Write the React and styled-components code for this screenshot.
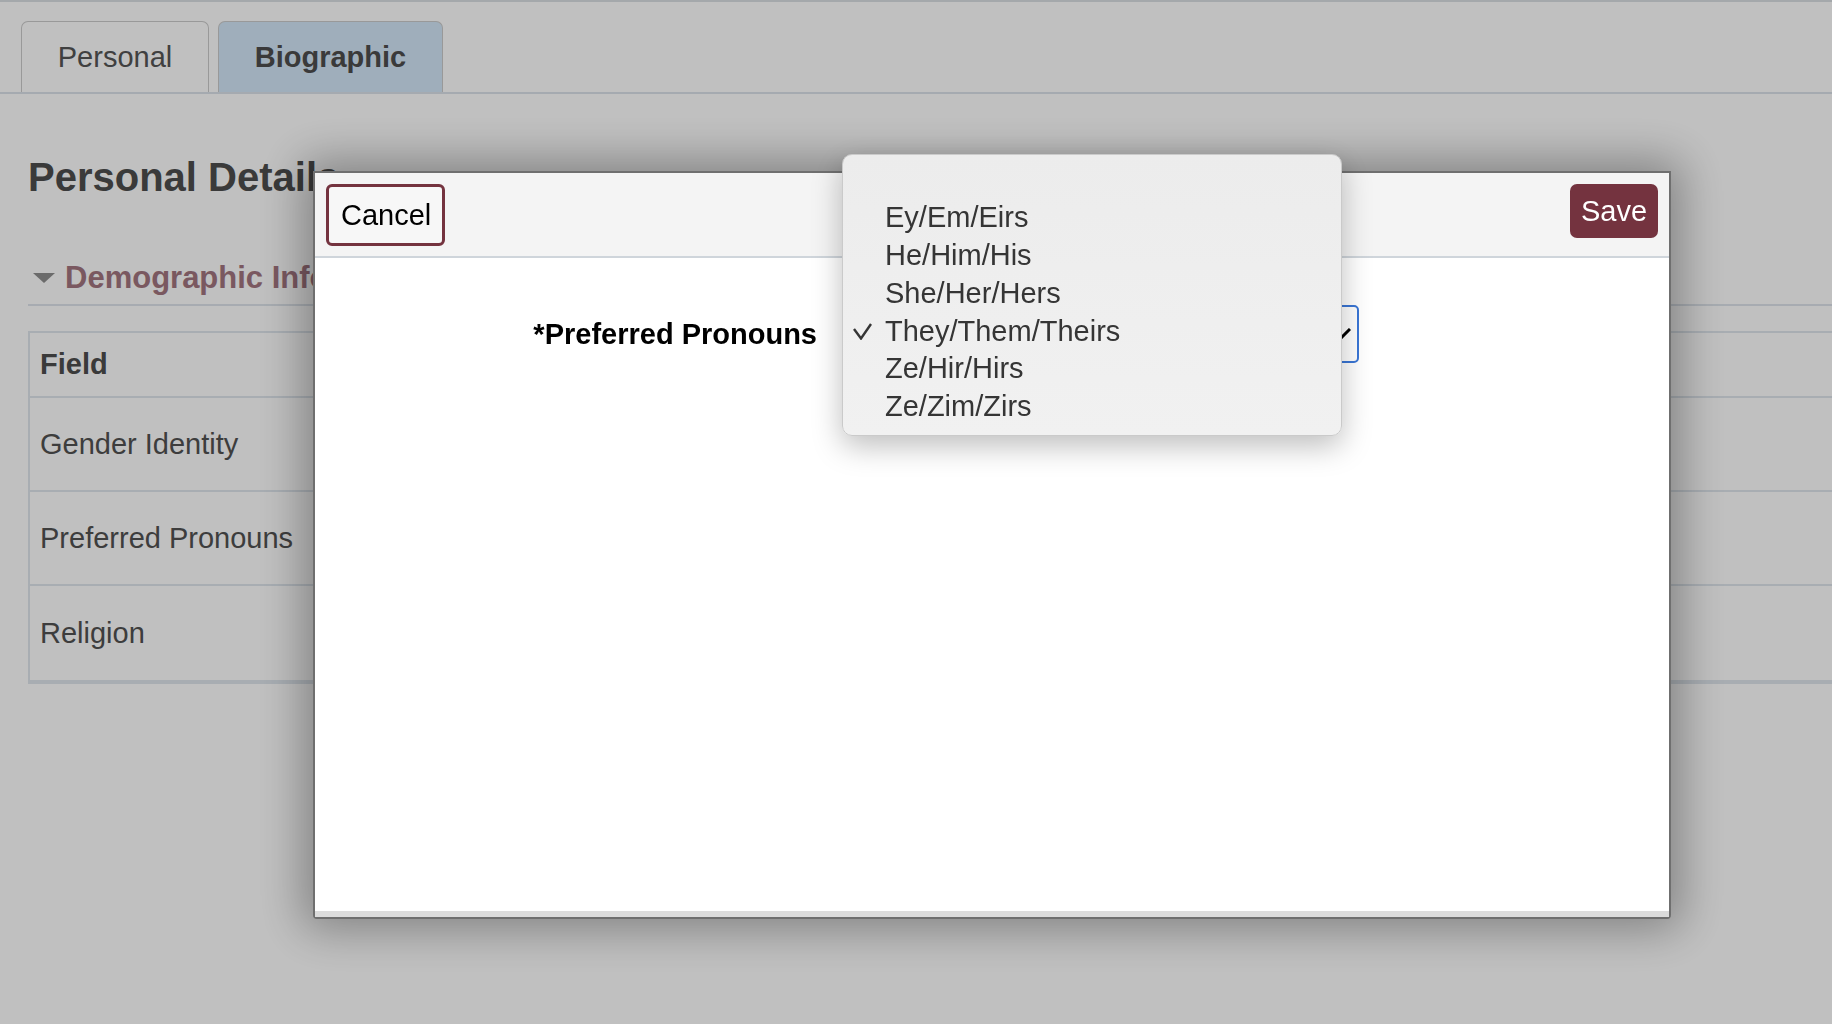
import React from 'react';
import styled, { createGlobalStyle } from 'styled-components';

const GlobalStyle = createGlobalStyle`
  html, body {
    margin: 0;
    padding: 0;
    background: #ffffff;
    font-family: "Liberation Sans", Arial, Helvetica, sans-serif;
  }
  * { box-sizing: border-box; }
`;

const Page = styled.div`
  min-height: 100vh;
  border-top: 2px solid #dadfe4;
  padding-top: 19px;
  overflow: hidden;
`;

const TabBar = styled.div`
  display: flex;
  align-items: flex-end;
  gap: 9px;
  padding-left: 21px;
  border-bottom: 2px solid #dbe2ea;
`;

const Tab = styled.div`
  width: ${p => p.$width}px;
  height: 71px;
  display: flex;
  align-items: center;
  justify-content: center;
  border: 1px solid #cbcbcb;
  border-bottom: none;
  border-radius: 7px 7px 0 0;
  background: ${p => (p.$active ? '#d3e8f9' : '#ffffff')};
  color: ${p => (p.$active ? '#4e4e4e' : '#555555')};
  font-size: 29px;
  font-weight: ${p => (p.$active ? 700 : 400)};
`;

const Content = styled.div`
  padding-left: 28px;
`;

const Heading = styled.h1`
  margin: 60px 0 0;
  font-size: 40px;
  line-height: 46px;
  font-weight: 700;
  color: #4d4d4d;
`;

const SectionHeader = styled.div`
  margin-top: 60px;
  padding-bottom: 9px;
  display: flex;
  align-items: center;
  gap: 10px;
  border-bottom: 2px solid #dee4eb;
  color: #a27580;
  font-size: 31px;
  line-height: 35px;
  font-weight: 700;
  white-space: nowrap;
`;

const Caret = styled.svg`
  margin-left: 5px;
  flex: none;
`;

const Table = styled.div`
  margin-top: 25px;
  border-top: 2px solid #dfe6ed;
  border-left: 2px solid #dfe6ed;
  border-bottom: 4px solid #dfe6ed;
`;

const Row = styled.div`
  height: ${p => (p.$header ? 65 : 94)}px;
  display: flex;
  align-items: center;
  padding-left: 10px;
  border-bottom: ${p => (p.$last ? 'none' : '2px solid #dfe6ed')};
  font-size: 29px;
  font-weight: ${p => (p.$header ? 700 : 400)};
  color: ${p => (p.$header ? '#4d4d4d' : '#525252')};
`;

const Overlay = styled.div`
  position: fixed;
  inset: 0;
  background: rgba(0, 0, 0, 0.247);
  z-index: 10;
`;

const Modal = styled.div`
  position: fixed;
  left: 313px;
  top: 171px;
  width: 1358px;
  height: 748px;
  display: flex;
  flex-direction: column;
  background: #ffffff;
  border: 2px solid #6f6f6f;
  border-radius: 0 0 4px 4px;
  box-shadow: 0 0 46px 10px rgba(0, 0, 0, 0.33);
  z-index: 20;
`;

const ModalHeader = styled.div`
  height: 85px;
  flex: none;
  display: flex;
  justify-content: space-between;
  align-items: flex-start;
  padding: 11px 11px 0;
  background: #f4f4f4;
  border-bottom: 2px solid #cfd5db;
`;

const CancelButton = styled.button`
  height: 62px;
  width: 119px;
  padding: 0 0 0 12px;
  text-align: left;
  border: 3px solid #74333f;
  border-radius: 6px;
  background: #f7f7f7;
  color: #000000;
  font-family: inherit;
  font-size: 29px;
`;

const SaveButton = styled.button`
  height: 54px;
  width: 88px;
  padding: 0;
  border: none;
  border-radius: 7px;
  background: #74333f;
  color: #ffffff;
  font-family: inherit;
  font-size: 29px;
`;

const ModalBody = styled.div`
  flex: 1;
  padding-top: 47px;
`;

const FieldRow = styled.div`
  display: flex;
  align-items: center;
`;

const Label = styled.label`
  width: 502px;
  text-align: right;
  font-size: 29px;
  font-weight: 700;
  color: #000000;
`;

const SelectBox = styled.div`
  position: relative;
  margin-left: 29px;
  width: 513px;
  height: 58px;
  display: flex;
  align-items: center;
  justify-content: flex-end;
  padding-right: 6px;
  border: 2px solid #3a76d6;
  border-radius: 5px;
  background: #ffffff;
`;

const Menu = styled.ul`
  position: absolute;
  left: -6px;
  top: -153px;
  width: 500px;
  height: 282px;
  margin: 0;
  padding: 6px 0 8px;
  list-style: none;
  background: linear-gradient(#ececec, #f1f1f1);
  border: 1px solid #cacaca;
  border-radius: 10px;
  box-shadow: 0 10px 30px rgba(0, 0, 0, 0.26);
`;

const MenuItem = styled.li`
  height: 37.8px;
  display: flex;
  align-items: center;
  font-size: 29px;
  color: #353535;
`;

const CheckSlot = styled.span`
  width: 42px;
  flex: none;
  display: flex;
  align-items: center;
  padding-left: 10px;
`;

const Footer = styled.div`
  height: 6px;
  flex: none;
  background: #dcdcdc;
`;

const pronouns = [
  '',
  'Ey/Em/Eirs',
  'He/Him/His',
  'She/Her/Hers',
  'They/Them/Theirs',
  'Ze/Hir/Hirs',
  'Ze/Zim/Zirs',
];

const rows = ['Gender Identity', 'Preferred Pronouns', 'Religion'];

const App = () => {
  const selected = 'They/Them/Theirs';
  return (
    <>
      <GlobalStyle />
      <Page>
        <TabBar>
          <Tab $width={188}>Personal</Tab>
          <Tab $width={225} $active>Biographic</Tab>
        </TabBar>
        <Content>
          <Heading>Personal Details</Heading>
          <SectionHeader>
            <Caret width="22" height="10" viewBox="0 0 22 10">
              <polygon points="0,0 22,0 11,10" fill="#8e8e8e" />
            </Caret>
            Demographic Information
          </SectionHeader>
          <Table>
            <Row $header>Field</Row>
            {rows.map((r, i) => (
              <Row key={r} $last={i === rows.length - 1}>{r}</Row>
            ))}
          </Table>
        </Content>
      </Page>

      <Overlay />
      <Modal>
        <ModalHeader>
          <CancelButton>Cancel</CancelButton>
          <SaveButton>Save</SaveButton>
        </ModalHeader>
        <ModalBody>
          <FieldRow>
            <Label>*Preferred Pronouns</Label>
            <SelectBox>
              <svg width="20" height="12" viewBox="0 0 20 12">
                <polyline points="1,1 10,10 19,1" fill="none" stroke="#000" strokeWidth="3" />
              </svg>
              <Menu>
                {pronouns.map((p, i) => (
                  <MenuItem key={i}>
                    <CheckSlot>
                      {p === selected && (
                        <svg width="19" height="17" viewBox="0 0 19 17">
                          <polyline points="1,6 8,15.5 18,1" fill="none" stroke="#353535" strokeWidth="2.4" />
                        </svg>
                      )}
                    </CheckSlot>
                    {p}
                  </MenuItem>
                ))}
              </Menu>
            </SelectBox>
          </FieldRow>
        </ModalBody>
        <Footer />
      </Modal>
    </>
  );
};

export default App;
